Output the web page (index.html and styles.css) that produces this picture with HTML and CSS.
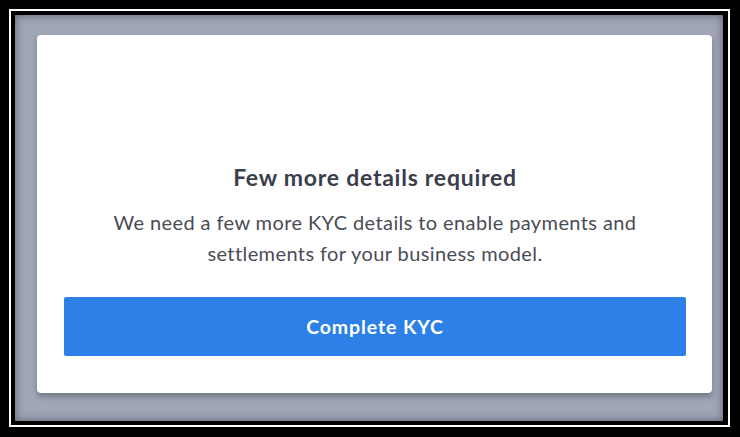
FILE: index.html
```html
<!DOCTYPE html>
<html>
<head>
<meta charset="utf-8">
<link rel="stylesheet" href="styles.css">
</head>
<body>
<div class="frame-outer">
  <div class="frame-line">
    <div class="frame-inner">
      <div class="backdrop">
        <div class="card">
          <h1 class="title">Few more details required</h1>
          <p class="desc">We need a few more KYC details to enable payments and<br>settlements for your business model.</p>
          <button class="cta">Complete KYC</button>
        </div>
      </div>
    </div>
  </div>
</div>
</body>
</html>
```
FILE: styles.css
```css
html, body {
  margin: 0;
  padding: 0;
  background: #000;
}
body {
  width: 740px;
  height: 437px;
  overflow: hidden;
  font-family: Lato, "Open Sans", sans-serif;
}
.frame-outer {
  box-sizing: border-box;
  width: 740px;
  height: 437px;
  padding: 9px 10px 10px 9px;
  background: #000;
}
.frame-line {
  box-sizing: border-box;
  height: 100%;
  border: 2px solid #fff;
  background: #000;
  padding: 4px 5px 4px 4px;
}
.frame-inner {
  height: 100%;
}
.backdrop {
  box-sizing: border-box;
  height: 100%;
  background: #9fa6b6;
  box-shadow: inset 0 0 10px rgba(40, 40, 55, 0.55);
  padding: 20px 11px 28px 22px;
  display: flex;
}
.card {
  flex: 1;
  background: #fff;
  border-radius: 4px;
  box-shadow: 0 4px 5px rgba(50, 50, 60, 0.35);
  display: flex;
  flex-direction: column;
  align-items: center;
  padding: 129px 26px 0 27px;
}
.title {
  margin: 0;
  font-size: 23px;
  line-height: 26px;
  letter-spacing: 0.75px;
  font-weight: 700;
  color: #3a3e4b;
}
.desc {
  margin: 17px 0 0;
  font-size: 20px;
  line-height: 31px;
  letter-spacing: 0.4px;
  color: #4a4c55;
  text-align: center;
}
.cta {
  margin-top: 28px;
  align-self: stretch;
  height: 59px;
  border: none;
  border-radius: 2px;
  background: #2d80e8;
  color: #fff;
  font-family: Lato, "Open Sans", sans-serif;
  font-weight: 700;
  font-size: 19.5px;
  letter-spacing: 0.9px;
  padding: 0;
}
```
